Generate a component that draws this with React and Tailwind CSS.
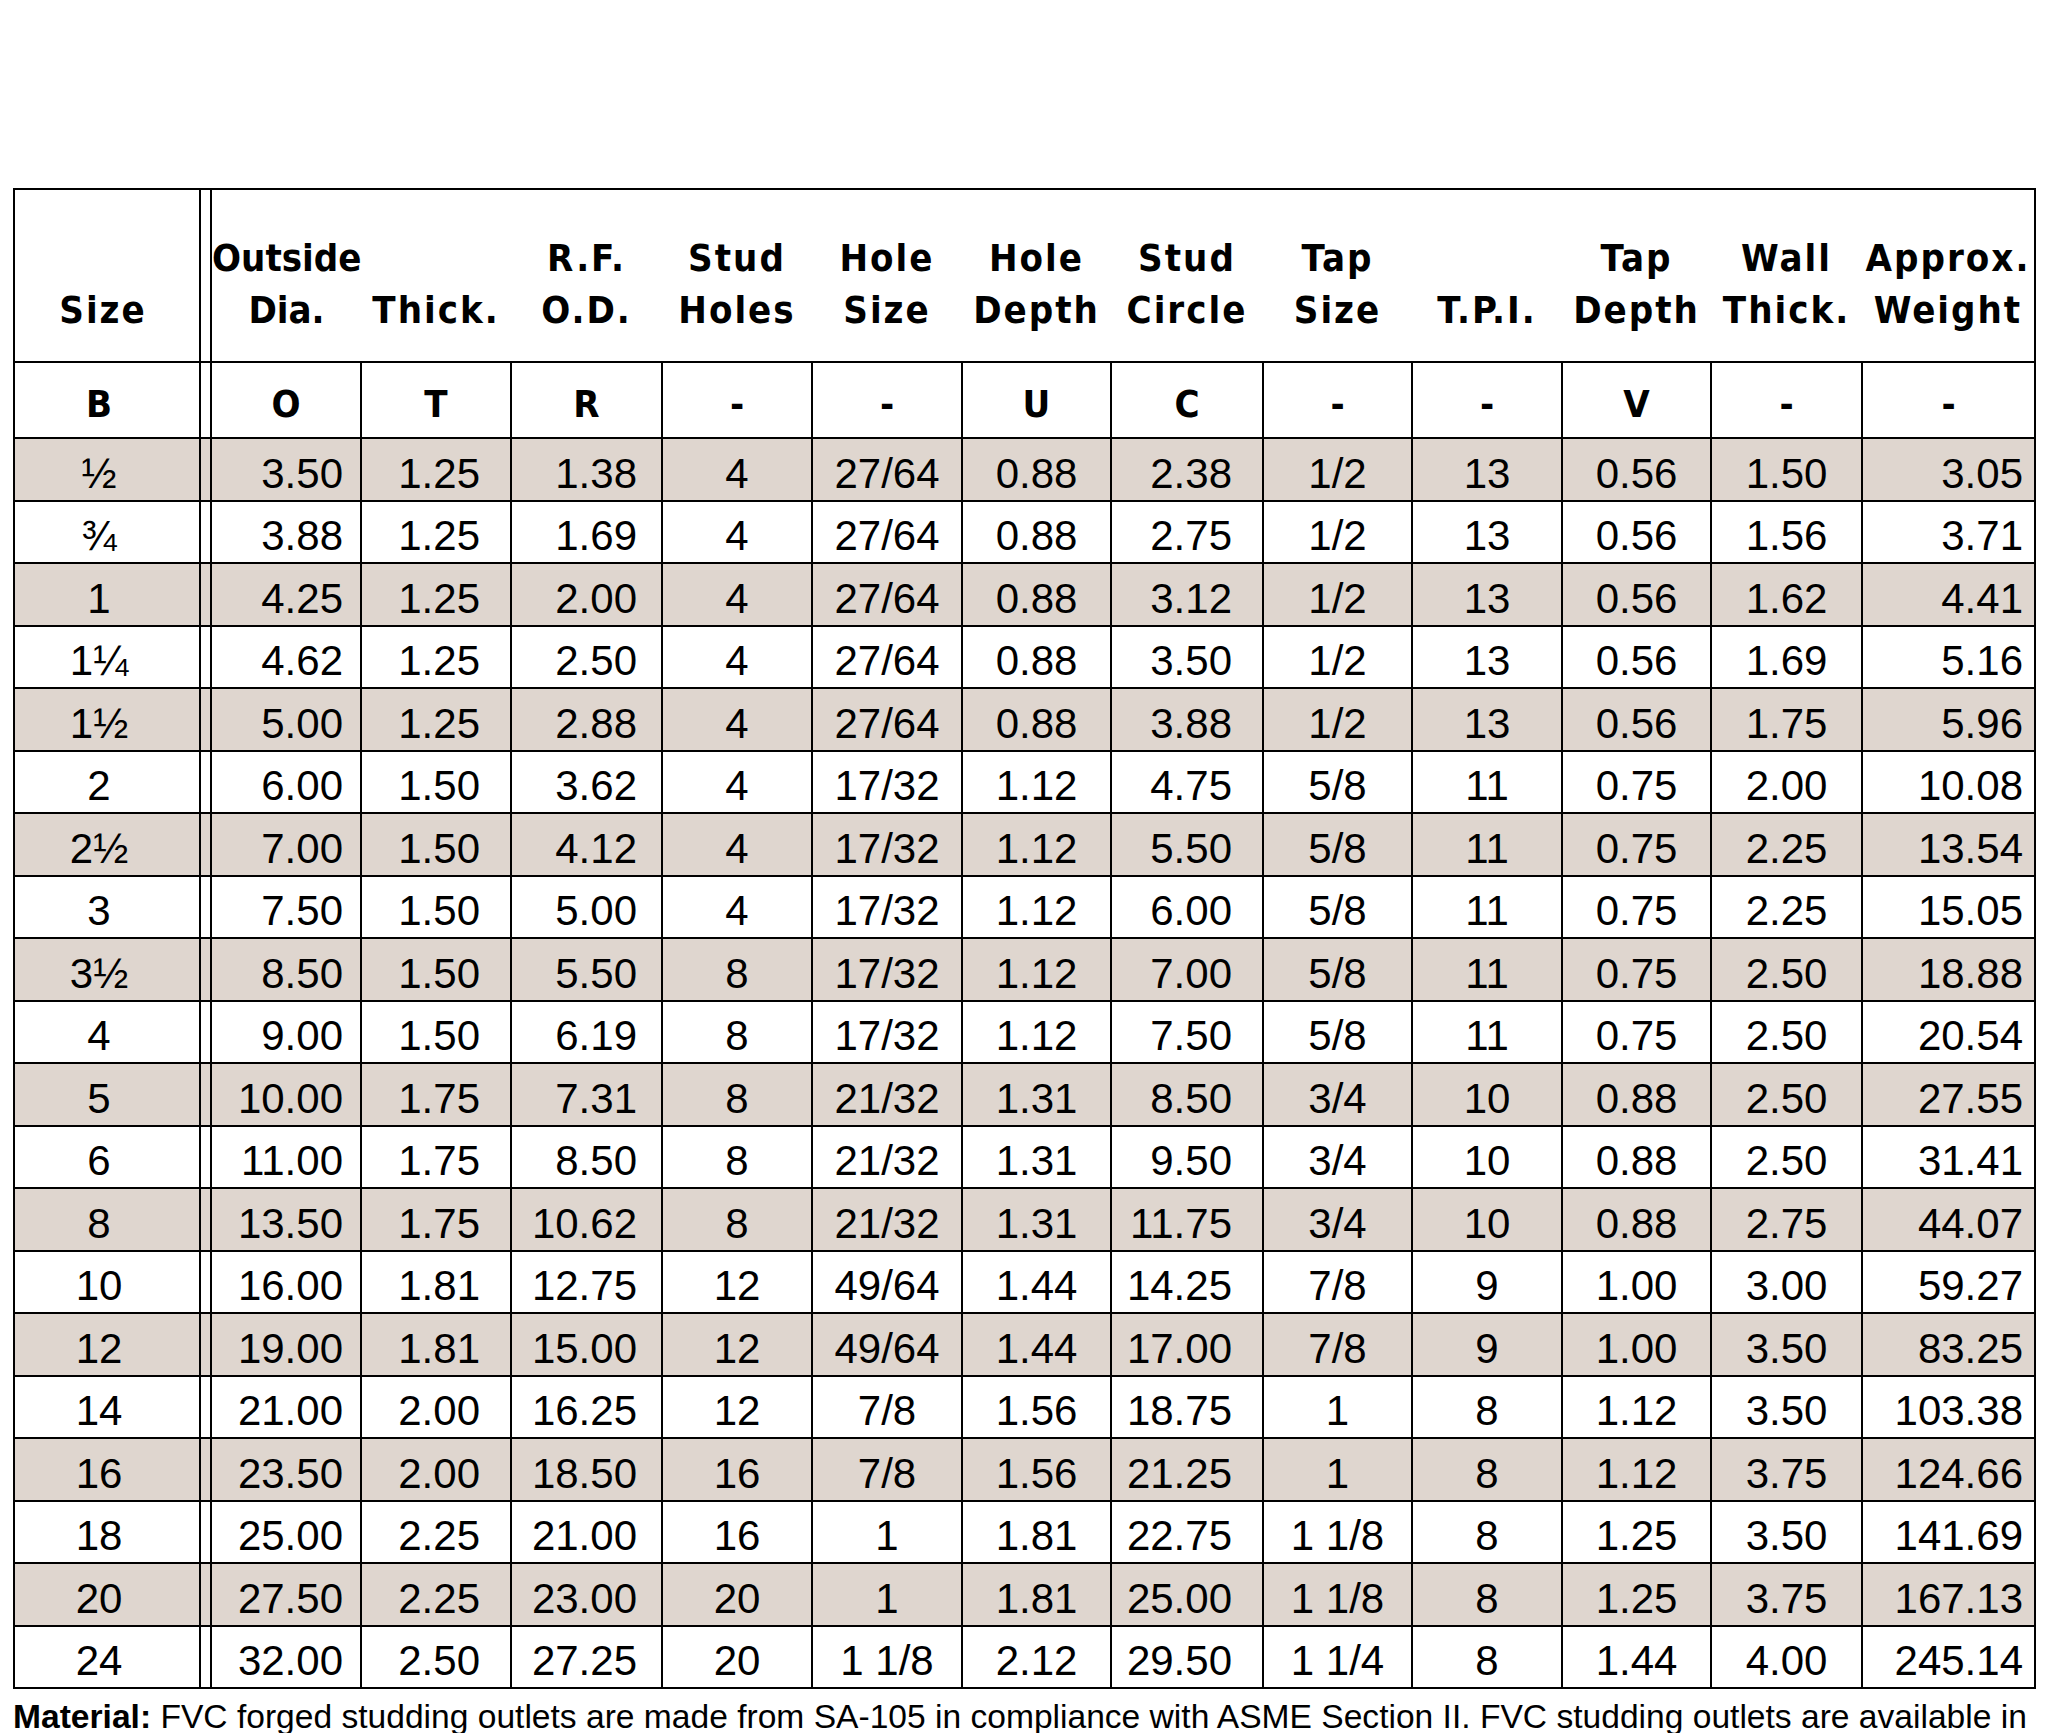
import React from 'react';

const widths = [186, 11, 150, 150, 151, 150, 150, 149, 152, 149, 150, 149, 151, 173];

const heads = [
  ['Outside', 'Dia.'],
  ['', 'Thick.'],
  ['R.F.', 'O.D.'],
  ['Stud', 'Holes'],
  ['Hole', 'Size'],
  ['Hole', 'Depth'],
  ['Stud', 'Circle'],
  ['Tap', 'Size'],
  ['', 'T.P.I.'],
  ['Tap', 'Depth'],
  ['Wall', 'Thick.'],
  ['Approx.', 'Weight'],
];

const letters = ['O', 'T', 'R', '-', '-', 'U', 'C', '-', '-', 'V', '-', '-'];

// text placement for each data column
const align = [
  'text-right pr-[17px]',
  'text-right pr-[30px]',
  'text-right pr-[24px]',
  'text-center',
  'text-center',
  'text-center',
  'text-right pr-[30px]',
  'text-center',
  'text-center',
  'text-center',
  'text-center',
  'text-right pr-[11px]',
];

const rows = [
  ['½', '3.50', '1.25', '1.38', '4', '27/64', '0.88', '2.38', '1/2', '13', '0.56', '1.50', '3.05'],
  ['¾', '3.88', '1.25', '1.69', '4', '27/64', '0.88', '2.75', '1/2', '13', '0.56', '1.56', '3.71'],
  ['1', '4.25', '1.25', '2.00', '4', '27/64', '0.88', '3.12', '1/2', '13', '0.56', '1.62', '4.41'],
  ['1¼', '4.62', '1.25', '2.50', '4', '27/64', '0.88', '3.50', '1/2', '13', '0.56', '1.69', '5.16'],
  ['1½', '5.00', '1.25', '2.88', '4', '27/64', '0.88', '3.88', '1/2', '13', '0.56', '1.75', '5.96'],
  ['2', '6.00', '1.50', '3.62', '4', '17/32', '1.12', '4.75', '5/8', '11', '0.75', '2.00', '10.08'],
  ['2½', '7.00', '1.50', '4.12', '4', '17/32', '1.12', '5.50', '5/8', '11', '0.75', '2.25', '13.54'],
  ['3', '7.50', '1.50', '5.00', '4', '17/32', '1.12', '6.00', '5/8', '11', '0.75', '2.25', '15.05'],
  ['3½', '8.50', '1.50', '5.50', '8', '17/32', '1.12', '7.00', '5/8', '11', '0.75', '2.50', '18.88'],
  ['4', '9.00', '1.50', '6.19', '8', '17/32', '1.12', '7.50', '5/8', '11', '0.75', '2.50', '20.54'],
  ['5', '10.00', '1.75', '7.31', '8', '21/32', '1.31', '8.50', '3/4', '10', '0.88', '2.50', '27.55'],
  ['6', '11.00', '1.75', '8.50', '8', '21/32', '1.31', '9.50', '3/4', '10', '0.88', '2.50', '31.41'],
  ['8', '13.50', '1.75', '10.62', '8', '21/32', '1.31', '11.75', '3/4', '10', '0.88', '2.75', '44.07'],
  ['10', '16.00', '1.81', '12.75', '12', '49/64', '1.44', '14.25', '7/8', '9', '1.00', '3.00', '59.27'],
  ['12', '19.00', '1.81', '15.00', '12', '49/64', '1.44', '17.00', '7/8', '9', '1.00', '3.50', '83.25'],
  ['14', '21.00', '2.00', '16.25', '12', '7/8', '1.56', '18.75', '1', '8', '1.12', '3.50', '103.38'],
  ['16', '23.50', '2.00', '18.50', '16', '7/8', '1.56', '21.25', '1', '8', '1.12', '3.75', '124.66'],
  ['18', '25.00', '2.25', '21.00', '16', '1', '1.81', '22.75', '1 1/8', '8', '1.25', '3.50', '141.69'],
  ['20', '27.50', '2.25', '23.00', '20', '1', '1.81', '25.00', '1 1/8', '8', '1.25', '3.75', '167.13'],
  ['24', '32.00', '2.50', '27.25', '20', '1 1/8', '2.12', '29.50', '1 1/4', '8', '1.44', '4.00', '245.14'],
];

const headFont = "font-['DejaVu_Sans_Condensed','DejaVu_Sans',sans-serif] [font-stretch:condensed] font-bold";

export default function App() {
  return (
    <div className="min-h-screen bg-white pt-[188px] pl-[13px] font-['Liberation_Sans',Arial,sans-serif] text-black">
      <table className="table-fixed border-collapse w-[2023px]">
        <colgroup>
          {widths.map((w, i) => (
            <col key={i} style={{ width: w }} />
          ))}
        </colgroup>
        <thead>
          <tr className="h-[173px]">
            <th className={`border-2 border-black align-middle pt-[16px] pr-[8px] text-[38px] leading-[52px] tracking-[2px] ${headFont}`}>
              <div>&nbsp;</div>
              <div>Size</div>
            </th>
            <th className="border-2 border-black" />
            {heads.map(([a, b], i) => (
              <th
                key={i}
                className={`border-y-2 border-black align-middle pt-[16px] whitespace-nowrap text-[38px] leading-[52px] ${i === 0 ? 'tracking-[0px]' : 'tracking-[2px]'} ${headFont} ${i === heads.length - 1 ? 'border-r-2' : ''}`}
              >
                <div>{a || '\u00a0'}</div>
                <div>{b}</div>
              </th>
            ))}
          </tr>
          <tr className="h-[76px]">
            <th className={`border-2 border-black pt-[8px] pr-[16px] text-[38px] ${headFont}`}>B</th>
            <th className="border-2 border-black" />
            {letters.map((l, i) => (
              <th key={i} className={`border-2 border-black pt-[8px] text-[38px] ${headFont}`}>
                {l}
              </th>
            ))}
          </tr>
        </thead>
        <tbody>
          {rows.map((r, ri) => (
            <tr key={ri} className={`h-[62.5px] ${ri % 2 === 0 ? 'bg-[#dfd6cf]' : 'bg-white'}`}>
              <td className="border-2 border-black text-center pt-[9px] pr-[16px] text-[42px] leading-none">{r[0]}</td>
              <td className="border-2 border-black" />
              {r.slice(1).map((v, ci) => (
                <td key={ci} className={`border-2 border-black pt-[9px] text-[42px] leading-none whitespace-nowrap ${align[ci]}`}>
                  {v}
                </td>
              ))}
            </tr>
          ))}
        </tbody>
      </table>
      <p className="mt-[9px] whitespace-nowrap text-[33.6px] leading-[38px]">
        <span className="font-bold">Material:</span> FVC forged studding outlets are made from SA-105 in compliance with ASME Section II. FVC studding outlets are available in
      </p>
    </div>
  );
}
